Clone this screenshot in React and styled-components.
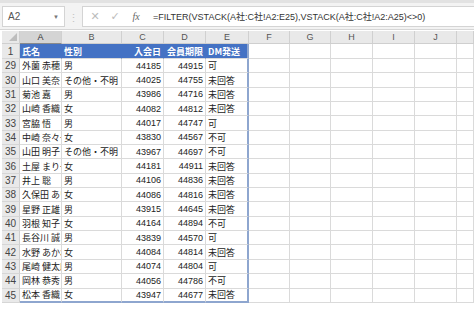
import styled, { createGlobalStyle } from "styled-components";

const GlobalStyle = createGlobalStyle`
  html, body { margin: 0; padding: 0; background: #fff; overflow: hidden; }
  body { font-family: "Noto Sans CJK JP", "Liberation Sans", sans-serif; }
`;

const COLS = ["A", "B", "C", "D", "E", "F", "G", "H", "I", "J", ""];
const TEMPLATE = "18px 42px 60px 42px 42px 43px 41px 41px 42px 42px 42px 1fr";

const rows = [
  [29, "外薗 赤穂", "男", 44185, 44915, "可"],
  [30, "山口 美奈", "その他・不明", 44025, 44755, "未回答"],
  [31, "菊池 嘉", "男", 43986, 44716, "未回答"],
  [32, "山崎 香織", "女", 44082, 44812, "未回答"],
  [33, "宮脇 悟", "男", 44017, 44747, "可"],
  [34, "中崎 奈々子", "女", 43830, 44567, "不可"],
  [35, "山田 明子", "その他・不明", 43967, 44697, "不可"],
  [36, "土屋 まり子", "女", 44181, 44911, "未回答"],
  [37, "井上 聡", "男", 44106, 44836, "未回答"],
  [38, "久保田 あい", "女", 44086, 44816, "未回答"],
  [39, "星野 正雄", "男", 43915, 44645, "未回答"],
  [40, "羽根 知子", "女", 44164, 44894, "不可"],
  [41, "長谷川 誠", "男", 43839, 44570, "可"],
  [42, "水野 あかね", "女", 44084, 44814, "未回答"],
  [43, "尾崎 健太郎", "男", 44074, 44804, "可"],
  [44, "岡林 恭秀", "男", 44056, 44786, "不可"],
  [45, "松本 香織", "女", 43947, 44677, "未回答"],
];

const Page = styled.div`
  display: flex;
  flex-direction: column;
  width: 474px;
  height: 309px;
  overflow: hidden;
`;

const FormulaBar = styled.div`
  display: flex;
  align-items: center;
  height: 30px;
  box-sizing: border-box;
  padding: 3px 0 2px 2px;
  background: #f3f3f3;
  border-top: 3px solid #e2e2e2;
  border-bottom: 1px solid #d6d6d6;
  flex-shrink: 0;
`;

const NameBox = styled.div`
  display: flex;
  align-items: center;
  justify-content: space-between;
  flex-shrink: 0;
  width: 63px;
  height: 100%;
  box-sizing: border-box;
  padding: 0 5px 0 5px;
  background: #fff;
  border: 1px solid #d4d4d4;
  font-family: "Liberation Sans", sans-serif;
  font-size: 10px;
  color: #555;
  span:last-child { font-size: 6px; color: #777; }
`;

const Dots = styled.div`
  flex-shrink: 0;
  width: 17px;
  text-align: center;
  color: #c4c4c4;
  font-size: 11px;
`;

const FormulaBox = styled.div`
  flex: 1;
  min-width: 0;
  overflow: hidden;
  display: flex;
  align-items: center;
  height: 100%;
  box-sizing: border-box;
  padding-left: 2px;
  background: #fff;
  border: 1px solid #d4d4d4;
  border-right: none;
  white-space: nowrap;
`;

const ToolIcon = styled.span`
  flex-shrink: 0;
  width: ${(p) => p.$w}px;
  text-align: center;
  color: ${(p) => p.$c || "#bcbcbc"};
  font-size: ${(p) => p.$s || 11}px;
  font-style: ${(p) => (p.$italic ? "italic" : "normal")};
  font-family: "DejaVu Sans", sans-serif;
`;

const Fx = styled.span`
  flex-shrink: 0;
  width: 22px;
  text-align: center;
  font-family: "Liberation Serif", serif;
  font-style: italic;
  font-size: 10px;
  color: #666;
`;

const Formula = styled.span`
  margin-left: 6px;
  font-family: "Liberation Sans", "Noto Sans CJK JP", sans-serif;
  font-size: 9px;
  color: #333;
`;

const Sheet = styled.div`
  margin-top: 1px;
  display: grid;
  grid-template-columns: ${TEMPLATE};
  grid-template-rows: 13px 15px;
  grid-auto-rows: 14.35px;
  border-left: 2px solid #9fb4a5;
  margin-left: -2px;
  padding-left: 2px;
`;

const ColHead = styled.div`
  display: flex;
  align-items: center;
  justify-content: center;
  background: ${(p) => (p.$active ? "#d4d4d4" : "#e9e9e9")};
  border-right: 1px solid #d0d0d0;
  border-bottom: 1px solid ${(p) => (p.$active ? "#8a8a8a" : "#cfcfcf")};
  font-family: "Liberation Sans", sans-serif;
  font-size: 9px;
  color: ${(p) => (p.$active ? "#333" : "#555")};
  box-sizing: border-box;
`;

const Corner = styled.div`
  position: relative;
  background: #e9e9e9;
  border-right: 1px solid #cfcfcf;
  border-bottom: 1px solid #cfcfcf;
  box-sizing: border-box;
  &::after {
    content: "";
    position: absolute;
    right: 2px;
    bottom: 2px;
    border-style: solid;
    border-width: 0 0 8px 8px;
    border-color: transparent transparent #bdbdbd transparent;
  }
`;

const RowHead = styled.div`
  display: flex;
  align-items: center;
  justify-content: center;
  background: #e9e9e9;
  border-right: 1px solid #cfcfcf;
  border-bottom: 1px solid #d6d6d6;
  font-family: "Liberation Sans", sans-serif;
  font-size: 10px;
  color: #444;
  box-sizing: border-box;
`;

const Cell = styled.div`
  display: flex;
  align-items: center;
  justify-content: ${(p) => (p.$right ? "flex-end" : "flex-start")};
  min-width: 0;
  padding: 0 2px;
  overflow: hidden;
  white-space: nowrap;
  box-sizing: border-box;
  font-size: 9px;
  font-family: ${(p) =>
    p.$num ? '"Liberation Sans", sans-serif' : '"Noto Sans CJK JP", sans-serif'};
  color: ${(p) => (p.$head ? "#fff" : "#222")};
  font-weight: ${(p) => (p.$head ? 700 : 400)};
  background: ${(p) => (p.$head ? "#4472c4" : "#fff")};
  border-right: ${(p) =>
    p.$edge ? "2px solid #8ea6cf" : `1px solid ${p.$head ? "#4472c4" : "#dadada"}`};
  border-bottom: ${(p) => (p.$last ? "2px solid #8ea6cf" : "1px solid #dadada")};
`;

const Blank = styled.div`
  border-right: 1px solid #dadada;
  border-bottom: 1px solid #dadada;
  box-sizing: border-box;
`;

function DataRow({ row, head }) {
  const [n, name, sex, joined, until, dm] = row;
  const last = n === 45;
  return (
    <>
      <RowHead>{n}</RowHead>
      <Cell $head={head} $last={last}>{name}</Cell>
      <Cell $head={head} $last={last}>{sex}</Cell>
      <Cell $head={head} $last={last} $num={!head} $right>{joined}</Cell>
      <Cell $head={head} $last={last} $num={!head} $right>{until}</Cell>
      <Cell $head={head} $last={last} $edge>{dm}</Cell>
      {COLS.slice(5).map((c, i) => (
        <Blank key={i} />
      ))}
    </>
  );
}

export default function App() {
  return (
    <Page>
      <GlobalStyle />
      <FormulaBar>
        <NameBox>
          <span>A2</span>
          <span>▼</span>
        </NameBox>
        <Dots>⋮</Dots>
        <FormulaBox>
          <ToolIcon $w={20} $s={11}>✕</ToolIcon>
          <ToolIcon $w={20} $s={11}>✓</ToolIcon>
          <Fx>fx</Fx>
          <Formula>=FILTER(VSTACK(A社:C社!A2:E25),VSTACK(A社:C社!A2:A25)&lt;&gt;0)</Formula>
        </FormulaBox>
      </FormulaBar>
      <Sheet>
        <Corner />
        {COLS.map((c, i) => (
          <ColHead key={i} $active={c === "A"}>{c}</ColHead>
        ))}
        <DataRow head row={[1, "氏名", "性別", "入会日", "会員期限", "DM発送"]} />
        {rows.map((r) => (
          <DataRow key={r[0]} row={r} />
        ))}
      </Sheet>
    </Page>
  );
}
